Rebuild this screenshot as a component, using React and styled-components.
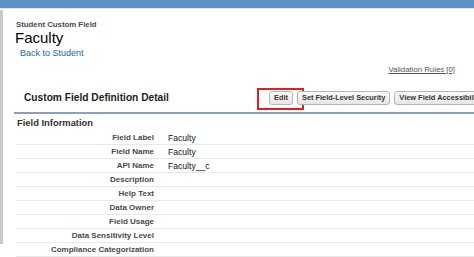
import styled, { createGlobalStyle } from 'styled-components';

const GlobalStyle = createGlobalStyle`
  html, body {
    margin: 0;
    padding: 0;
    background: #fff;
    overflow: hidden;
  }
  body {
    font-family: "Liberation Sans", Arial, sans-serif;
    color: #000;
  }
`;

const fields = [
  { label: 'Field Label', value: 'Faculty' },
  { label: 'Field Name', value: 'Faculty' },
  { label: 'API Name', value: 'Faculty__c' },
  { label: 'Description', value: '' },
  { label: 'Help Text', value: '' },
  { label: 'Data Owner', value: '' },
  { label: 'Field Usage', value: '' },
  { label: 'Data Sensitivity Level', value: '' },
  { label: 'Compliance Categorization', value: '' },
];

const buttons = [
  { text: 'Edit', highlight: true },
  { text: 'Set Field-Level Security' },
  { text: 'View Field Accessibility' },
];

export default function App() {
  return (
    <>
      <GlobalStyle />
      <Page>
        <TopBar />
        <Main>
          <SideRail />
          <Content>
            <Breadcrumb>Student Custom Field</Breadcrumb>
            <Title>Faculty</Title>
            <BackLink href="#">Back to Student</BackLink>
            <RelatedLinks>
              <a href="#">Validation Rules [0]</a>
            </RelatedLinks>
            <SectionHeader>
              <SectionTitle>Custom Field Definition Detail</SectionTitle>
              <ButtonGroup>
                {buttons.map((b) => (
                  <Button key={b.text} $highlight={b.highlight}>
                    {b.text}
                  </Button>
                ))}
              </ButtonGroup>
            </SectionHeader>
            <SubHeader>Field Information</SubHeader>
            <DetailTable>
              {fields.map((f) => (
                <Row key={f.label}>
                  <Label>{f.label}</Label>
                  <Value>{f.value}</Value>
                </Row>
              ))}
            </DetailTable>
          </Content>
        </Main>
      </Page>
    </>
  );
}

const Page = styled.div`
  width: 474px;
  height: 257px;
  overflow: hidden;
`;

const TopBar = styled.div`
  height: 8px;
  background: #5d8fc9;
  border-bottom: 1px solid #dce6f1;
`;

const Main = styled.div`
  display: flex;
  align-items: flex-start;
`;

const SideRail = styled.div`
  flex: 0 0 3px;
  height: 234px;
  margin-top: 1px;
  background: #c9c9c9;
`;

const Content = styled.div`
  flex: 1;
  min-width: 0;
  padding-left: 11px;
`;

const Breadcrumb = styled.div`
  margin: 11px 0 0 2px;
  font-size: 7.8px;
  line-height: 10px;
  font-weight: bold;
  color: #4a4a4a;
`;

const Title = styled.h1`
  margin: 0 0 0 1px;
  font-size: 15px;
  line-height: 16px;
  font-weight: normal;
  color: #000;
`;

const BackLink = styled.a`
  display: block;
  margin: 2px 0 0 6px;
  font-size: 9px;
  line-height: 10px;
  color: #1f64ad;
  text-decoration: none;
`;

const RelatedLinks = styled.div`
  margin-top: 7px;
  padding-right: 19px;
  text-align: right;
  font-size: 7.8px;
  line-height: 10px;

  a {
    color: #555;
    text-decoration: underline;
  }
`;

const SectionHeader = styled.div`
  display: flex;
  align-items: center;
  box-sizing: border-box;
  height: 28px;
  padding-bottom: 3px;
  margin-top: 11px;
  border-bottom: 2px solid #8f9ec0;
`;

const SectionTitle = styled.h2`
  flex: 0 0 245px;
  margin: 0;
  padding-left: 10px;
  box-sizing: border-box;
  font-size: 10.2px;
  font-weight: bold;
  color: #222;
  white-space: nowrap;
`;

const ButtonGroup = styled.div`
  display: flex;
  gap: 4px;
  flex-shrink: 0;
  margin-left: 10px;
`;

const Button = styled.button`
  position: relative;
  height: 14px;
  padding: 0 4px;
  border: 1px solid #b5b5b5;
  border-radius: 3px;
  background: linear-gradient(#fbfbfb, #e6e6e6);
  font-family: inherit;
  font-size: 7.4px;
  font-weight: bold;
  color: #333;
  white-space: nowrap;

  ${({ $highlight }) =>
    $highlight &&
    `
    &::after {
      content: '';
      position: absolute;
      left: -13px;
      right: -12px;
      top: -4px;
      bottom: -6px;
      border: 2px solid #e0201f;
    }
  `}
`;

const SubHeader = styled.h3`
  margin: 0;
  padding: 3px 0 0 3px;
  height: 17px;
  box-sizing: border-box;
  font-size: 9.4px;
  line-height: 11px;
  font-weight: bold;
  color: #333;
`;

const DetailTable = styled.div`
  margin-left: 2px;
`;

const Row = styled.div`
  display: grid;
  grid-template-columns: 146px 1fr;
  height: 14px;
  align-items: center;
  border-bottom: 1px solid #e8e8e8;
  box-sizing: border-box;
`;

const Label = styled.div`
  padding-right: 8px;
  text-align: right;
  font-size: 8px;
  font-weight: bold;
  color: #4a4a4a;
  white-space: nowrap;
`;

const Value = styled.div`
  padding-left: 6px;
  font-size: 8.6px;
  color: #111;
`;
